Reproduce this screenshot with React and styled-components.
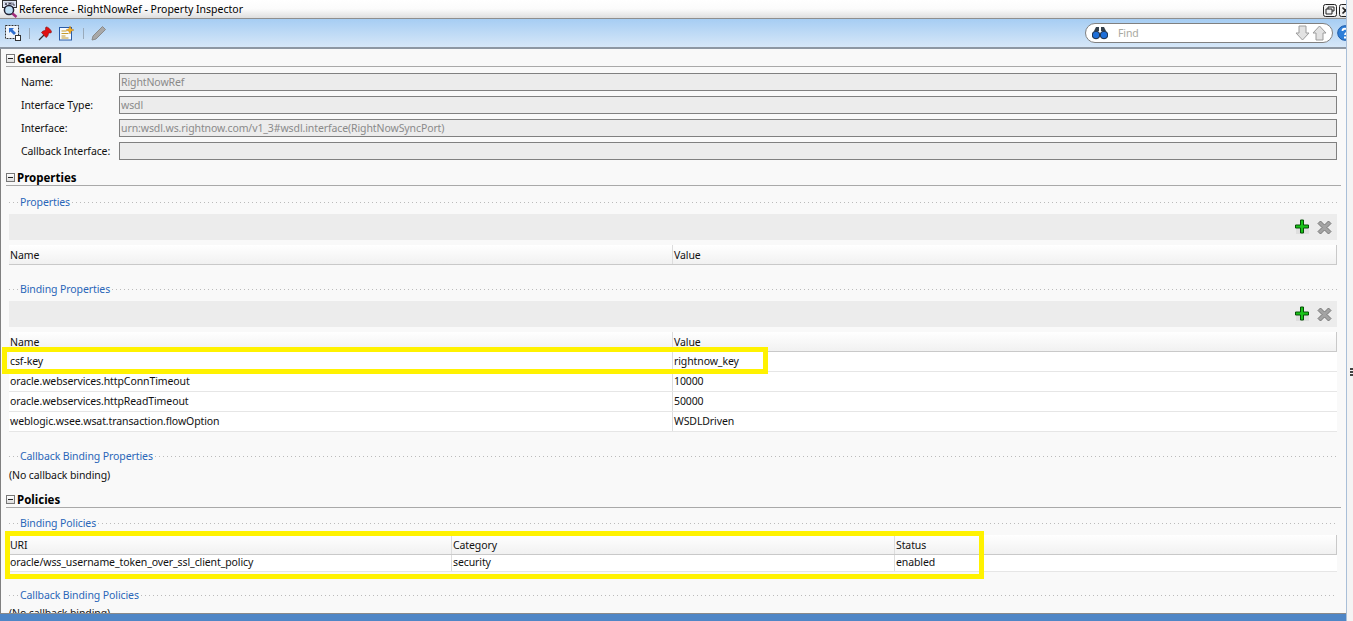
import React from "react";
import styled, { createGlobalStyle } from "styled-components";

const Global = createGlobalStyle`
  html, body { margin: 0; padding: 0; height: 100%; overflow: hidden; background: #fff; }
  body { font-family: "Noto Sans", "DejaVu Sans", sans-serif; font-size: 10.5px; letter-spacing: -0.1px; color: #000; }
  #root { height: 100%; }
`;

const Frame = styled.div`
  width: 1353px;
  height: 621px;
  display: flex;
  overflow: hidden;
  position: relative;
`;

const Main = styled.div`
  width: 1346px;
  flex: none;
  display: flex;
  flex-direction: column;
  overflow: hidden;
`;

const TitleBar = styled.div`
  height: 18px;
  flex: none;
  display: flex;
  align-items: center;
  background: linear-gradient(#fff, #fbfbfb 50%, #dedede);
  padding-left: 2px;
  gap: 1px;
  letter-spacing: 0;
`;

const TitleButtons = styled.div`
  display: flex;
  gap: 2px;
  margin-left: auto;
  margin-right: -6px;
  padding-top: 3px;
`;

const ToolBar = styled.div`
  height: 31px;
  flex: none;
  display: flex;
  align-items: center;
  box-sizing: border-box;
  border-top: 1px solid #8e8e8e;
  border-bottom: 2px solid #8d97a3;
  background: linear-gradient(#a6cdf3, #d6e7f8);
  padding: 0 0 0 5px;
`;

const ToolSlot = styled.span`
  display: flex;
  margin-left: ${(p) => p.$left || 0}px;
`;

const Sep = styled.span`
  width: 1px;
  height: 11px;
  background: #9ab;
  margin-left: ${(p) => p.$left}px;
`;

const FindBox = styled.div`
  margin-left: auto;
  width: 248px;
  height: 20px;
  box-sizing: border-box;
  border: 1px solid #808080;
  border-radius: 10px;
  background: #fff;
  display: flex;
  align-items: center;
  padding: 0 5px 0 6px;
  color: #a8a8a0;
  gap: 10px;
`;

const FindArrows = styled.div`
  margin-left: auto;
  display: flex;
  gap: 2px;
`;

const HelpSlot = styled.span`
  display: flex;
  flex: none;
  margin: 0 -7px 0 4px;
`;

const Content = styled.div`
  flex: 1;
  min-height: 0;
  box-sizing: border-box;
  border-left: 1px solid #808080;
  background: #f9f9f9;
  padding: 1px 5px 0 5px;
  overflow: hidden;
`;

const ScrollGutter = styled.div`
  flex: 1;
  box-sizing: border-box;
  border-left: 1px solid #a9bfd8;
  background: #f4f4f4;
  position: relative;
`;

const Grip = styled.span`
  position: absolute;
  left: 3px;
  top: 368px;
  width: 3px;
  height: 9px;
  background: repeating-linear-gradient(#444 0 2px, transparent 2px 3px);
`;

const SectionHead = styled.div`
  display: flex;
  align-items: center;
  gap: 2px;
  height: 16px;
  border-bottom: 1px solid #a9a9a9;
  margin-top: ${(p) => p.$top || 0}px;
  font-size: 11.5px;
  font-weight: 700;
  letter-spacing: 0;
`;

const Toggle = styled.span`
  width: 7px;
  height: 7px;
  border: 1px solid #777;
  background: linear-gradient(#fff, #ddd);
  display: flex;
  align-items: center;
  justify-content: center;
  &::before {
    content: "";
    width: 5px;
    height: 1px;
    background: #222;
  }
`;

const FieldRows = styled.div`
  display: grid;
  grid-template-columns: 113px 1218px;
  row-gap: 5px;
  padding: 6px 0 0 0;
  width: 1331px;
`;

const Label = styled.div`
  padding-left: 15px;
  line-height: 18px;
  white-space: nowrap;
  color: #111;
`;

const Input = styled.div`
  height: 18px;
  box-sizing: border-box;
  border: 1px solid #808080;
  background: #ececec;
  color: #8a8a8a;
  padding-left: 1px;
  line-height: 16px;
  white-space: nowrap;
`;

const Group = styled.div`
  display: flex;
  align-items: center;
  margin: ${(p) => p.$top || 0}px 0 0 3px;
  height: 14px;
  width: 1328px;
  color: #2a66b8;
  gap: 2px;
  &::before,
  &::after {
    content: "";
    height: 1px;
    background: repeating-linear-gradient(90deg, #bbb 0 1px, transparent 1px 4px);
  }
  &::before {
    width: 9px;
  }
  &::after {
    flex: 1;
  }
`;

const ActionBar = styled.div`
  margin: 5px 0 0 3px;
  width: 1328px;
  height: 26px;
  background: #ececec;
  display: flex;
  align-items: center;
  justify-content: flex-end;
  gap: 7px;
  padding-right: 5px;
  box-sizing: border-box;
`;

const Table = styled.div`
  margin: 5px 0 0 3px;
  width: 1328px;
`;

const Row = styled.div`
  display: grid;
  grid-template-columns: ${(p) => p.$cols};
  box-sizing: border-box;
  height: ${(p) => p.$h}px;
  background: ${(p) => (p.$head ? "linear-gradient(#fff, #f1f1f1)" : "#fff")};
  border-bottom: ${(p) => (p.$head ? "1px solid #c9c9c9" : "1px solid #e6e6e6")};
  border-right: ${(p) => (p.$head ? "1px solid #c9c9c9" : "0")};
`;

const Cell = styled.div`
  padding-left: 1px;
  border-left: ${(p) => (p.$sep ? "1px solid #ddd" : "0")};
  line-height: ${(p) => p.$lh}px;
  white-space: nowrap;
  overflow: hidden;
  color: #111;
`;

const Note = styled.div`
  margin: ${(p) => p.$top}px 0 0 3px;
  line-height: 14px;
  color: #111;
`;

const Highlight = styled.div`
  position: absolute;
  box-sizing: border-box;
  border: 5px solid #fff200;
  left: ${(p) => p.$x}px;
  top: ${(p) => p.$y}px;
  width: ${(p) => p.$w}px;
  height: ${(p) => p.$h}px;
  pointer-events: none;
`;

const StatusBar = styled.div`
  position: absolute;
  left: 0;
  width: 1346px;
  bottom: 0;
  height: 7px;
  border-top: 1px solid #8a8a8a;
  background: #4f86c6;
`;

const PlusIcon = () => (
  <svg width="15" height="16" viewBox="0 0 15 16">
    <path d="M1 9h13v6H1z" fill="#d6d6d6" opacity=".6" />
    <path d="M5.500 1h3v5h5v3h-5v5h-3V9h-5V6h5z" fill="#19c419" stroke="#064f06" />
  </svg>
);

const CrossIcon = () => (
  <svg width="15" height="15" viewBox="0 0 15 15">
    <path d="M3.500 1 7.500 5 11.500 1 14 3.500 10 7.500 14 11.500 11.500 14 7.500 10 3.500 14 1 11.500 5 7.500 1 3.500z" fill="#a3a3a3" stroke="#777" />
  </svg>
);

const LogoIcon = () => (
  <svg width="16" height="18" viewBox="0 0 16 18">
    <rect x=".5" y=".5" width="14" height="7" fill="#dfe6f4" stroke="#333" />
    <path d="M3 2.500 5 5M5 2.500 3 5M7 5V2.500L8 4l1-1.500V5M11 2.500V5h2" stroke="#223" fill="none" strokeWidth=".8" />
    <circle cx="7" cy="10" r="4.600" fill="#bfe0f5" stroke="#223" strokeWidth="1.500" />
    <path d="M10.500 13.500 14.500 17" stroke="#a02a7a" strokeWidth="2.500" />
  </svg>
);

const SelectIcon = () => (
  <svg width="16" height="16" viewBox="0 0 16 16">
    <rect x=".5" y=".5" width="13" height="13" fill="#eef4fb" stroke="#333" strokeDasharray="2 1" />
    <path d="M4 3h5L7.500 4.500 11 8l-2 2-3.500-3.500L4 8z" fill="#2f6fd0" />
    <rect x="10.500" y="10.500" width="5" height="5" fill="#fff" stroke="#333" />
  </svg>
);

const PinIcon = () => (
  <svg width="15" height="15" viewBox="0 0 15 15">
    <path d="M1 14 6 9" stroke="#333" strokeWidth="1.200" />
    <path d="M8 1c1.500-.5 5.500 3 5.500 5 0 1-1.500 1-3 1 0 2-1 4-2.500 4.500L3.500 6.500C4.500 5 6 4.500 7.500 4.500 7.500 3 7.300 2 8 1z" fill="#e01010" stroke="#801010" strokeWidth=".6" />
  </svg>
);

const NoteIcon = () => (
  <svg width="16" height="15" viewBox="0 0 16 15">
    <rect x=".5" y="1.500" width="12" height="12.500" fill="#f7fbff" stroke="#2a5ca8" />
    <path d="M2.500 5h5M2.500 7.500h7M2.500 10h4M2.500 12h7" stroke="#c79a2a" />
    <path d="M11 0l1.200 2.800L15 4l-2.800 1.200L11 8 9.800 5.200 7 4l2.800-1.200z" fill="#f0b020" stroke="#b06a10" strokeWidth=".4" />
  </svg>
);

const PencilIcon = () => (
  <svg width="16" height="16" viewBox="0 0 16 16">
    <path d="M1 15 2 11 11.500 1.500 14.500 4.500 5 14z" fill="#a8a8a8" stroke="#8a8a8a" />
  </svg>
);

const BinocularIcon = () => (
  <svg width="16" height="14" viewBox="0 0 16 14">
    <path d="M2 5 4 1h3v4h2V1h3l2 4z" fill="#34404c" />
    <circle cx="4" cy="9" r="3.800" fill="#1f6fd8" stroke="#1a2a40" />
    <circle cx="12" cy="9" r="3.800" fill="#1f6fd8" stroke="#1a2a40" />
  </svg>
);

const ArrowIcon = ({ up }) => (
  <svg width="15" height="16" viewBox="0 0 15 16">
    <path
      d={up ? "M7.500 1 14 8h-3v7H4V8H1z" : "M7.500 15 14 8h-3V1H4v7H1z"}
      fill="#e2e2e2"
      stroke="#9c9c9c"
    />
  </svg>
);

const HelpIcon = () => (
  <svg width="16" height="16" viewBox="0 0 16 16">
    <circle cx="8" cy="8" r="7.300" fill="#2f7fd8" stroke="#1c5aa8" />
    <path d="M5.500 6c0-3 5-3 5 0 0 2-2.500 2-2.500 4" fill="none" stroke="#fff" strokeWidth="1.800" />
    <path d="M7 11.500h2v2H7z" fill="#fff" />
  </svg>
);

const RestoreIcon = () => (
  <svg width="14" height="13" viewBox="0 0 14 13">
    <rect x=".5" y=".5" width="13" height="12" rx="2" fill="#f2f2f2" stroke="#222" />
    <path d="M5 5V3h6v4H9M3 5h6v5H3z" fill="none" stroke="#222" />
  </svg>
);

const CloseIcon = () => (
  <svg width="13" height="13" viewBox="0 0 13 13">
    <rect x=".5" y=".5" width="12" height="12" rx="2" fill="#f2f2f2" stroke="#222" />
    <path d="M3.500 3.500 9.500 9.500M9.500 3.500 3.500 9.500" stroke="#222" strokeWidth="1.600" />
  </svg>
);

const fields = [
  ["Name:", "RightNowRef"],
  ["Interface Type:", "wsdl"],
  ["Interface:", "urn:wsdl.ws.rightnow.com/v1_3#wsdl.interface(RightNowSyncPort)"],
  ["Callback Interface:", ""],
];

const bindingRows = [
  ["csf-key", "rightnow_key"],
  ["oracle.webservices.httpConnTimeout", "10000"],
  ["oracle.webservices.httpReadTimeout", "50000"],
  ["weblogic.wsee.wsat.transaction.flowOption", "WSDLDriven"],
];

const twoCols = "663px 1fr";
const policyCols = "442px 443px 1fr";

export default function App() {
  return (
    <Frame>
      <Global />
      <Main>
        <TitleBar>
          <LogoIcon />
          Reference - RightNowRef - Property Inspector
          <TitleButtons>
            <RestoreIcon />
            <CloseIcon />
          </TitleButtons>
        </TitleBar>
        <ToolBar>
          <SelectIcon />
          <Sep $left={8} />
          <ToolSlot $left={8}>
            <PinIcon />
          </ToolSlot>
          <ToolSlot $left={6}>
            <NoteIcon />
          </ToolSlot>
          <Sep $left={8} />
          <ToolSlot $left={7}>
            <PencilIcon />
          </ToolSlot>
          <FindBox>
            <BinocularIcon />
            Find
            <FindArrows>
              <ArrowIcon />
              <ArrowIcon up />
            </FindArrows>
          </FindBox>
          <HelpSlot>
            <HelpIcon />
          </HelpSlot>
        </ToolBar>
        <Content>
          <SectionHead>
            <Toggle />
            General
          </SectionHead>
          <FieldRows>
            {fields.map(([label, value]) => (
              <React.Fragment key={label}>
                <Label>{label}</Label>
                <Input>{value}</Input>
              </React.Fragment>
            ))}
          </FieldRows>
          <SectionHead $top={9}>
            <Toggle />
            Properties
          </SectionHead>
          <Group $top={9}>Properties</Group>
          <ActionBar>
            <PlusIcon />
            <CrossIcon />
          </ActionBar>
          <Table>
            <Row $head $cols={twoCols} $h={20}>
              <Cell $lh={20}>Name</Cell>
              <Cell $sep $lh={20}>Value</Cell>
            </Row>
          </Table>
          <Group $top={17}>Binding Properties</Group>
          <ActionBar>
            <PlusIcon />
            <CrossIcon />
          </ActionBar>
          <Table>
            <Row $head $cols={twoCols} $h={20}>
              <Cell $lh={20}>Name</Cell>
              <Cell $sep $lh={20}>Value</Cell>
            </Row>
            {bindingRows.map(([name, value]) => (
              <Row key={name} $cols={twoCols} $h={20}>
                <Cell $lh={19}>{name}</Cell>
                <Cell $sep $lh={19}>{value}</Cell>
              </Row>
            ))}
          </Table>
          <Group $top={17}>Callback Binding Properties</Group>
          <Note $top={5}>(No callback binding)</Note>
          <SectionHead $top={9}>
            <Toggle />
            Policies
          </SectionHead>
          <Group $top={8}>Binding Policies</Group>
          <Table>
            <Row $head $cols={policyCols} $h={20}>
              <Cell $lh={20}>URI</Cell>
              <Cell $sep $lh={20}>Category</Cell>
              <Cell $sep $lh={20}>Status</Cell>
            </Row>
            <Row $cols={policyCols} $h={17}>
              <Cell $lh={14}>oracle/wss_username_token_over_ssl_client_policy</Cell>
              <Cell $sep $lh={14}>security</Cell>
              <Cell $sep $lh={14}>enabled</Cell>
            </Row>
          </Table>
          <Group $top={16}>Callback Binding Policies</Group>
          <Note $top={4}>(No callback binding)</Note>
        </Content>
      </Main>
      <ScrollGutter>
        <Grip />
      </ScrollGutter>
      <Highlight $x={2} $y={347} $w={766} $h={27} />
      <Highlight $x={5} $y={531} $w={979} $h={48} />
      <StatusBar />
    </Frame>
  );
}
